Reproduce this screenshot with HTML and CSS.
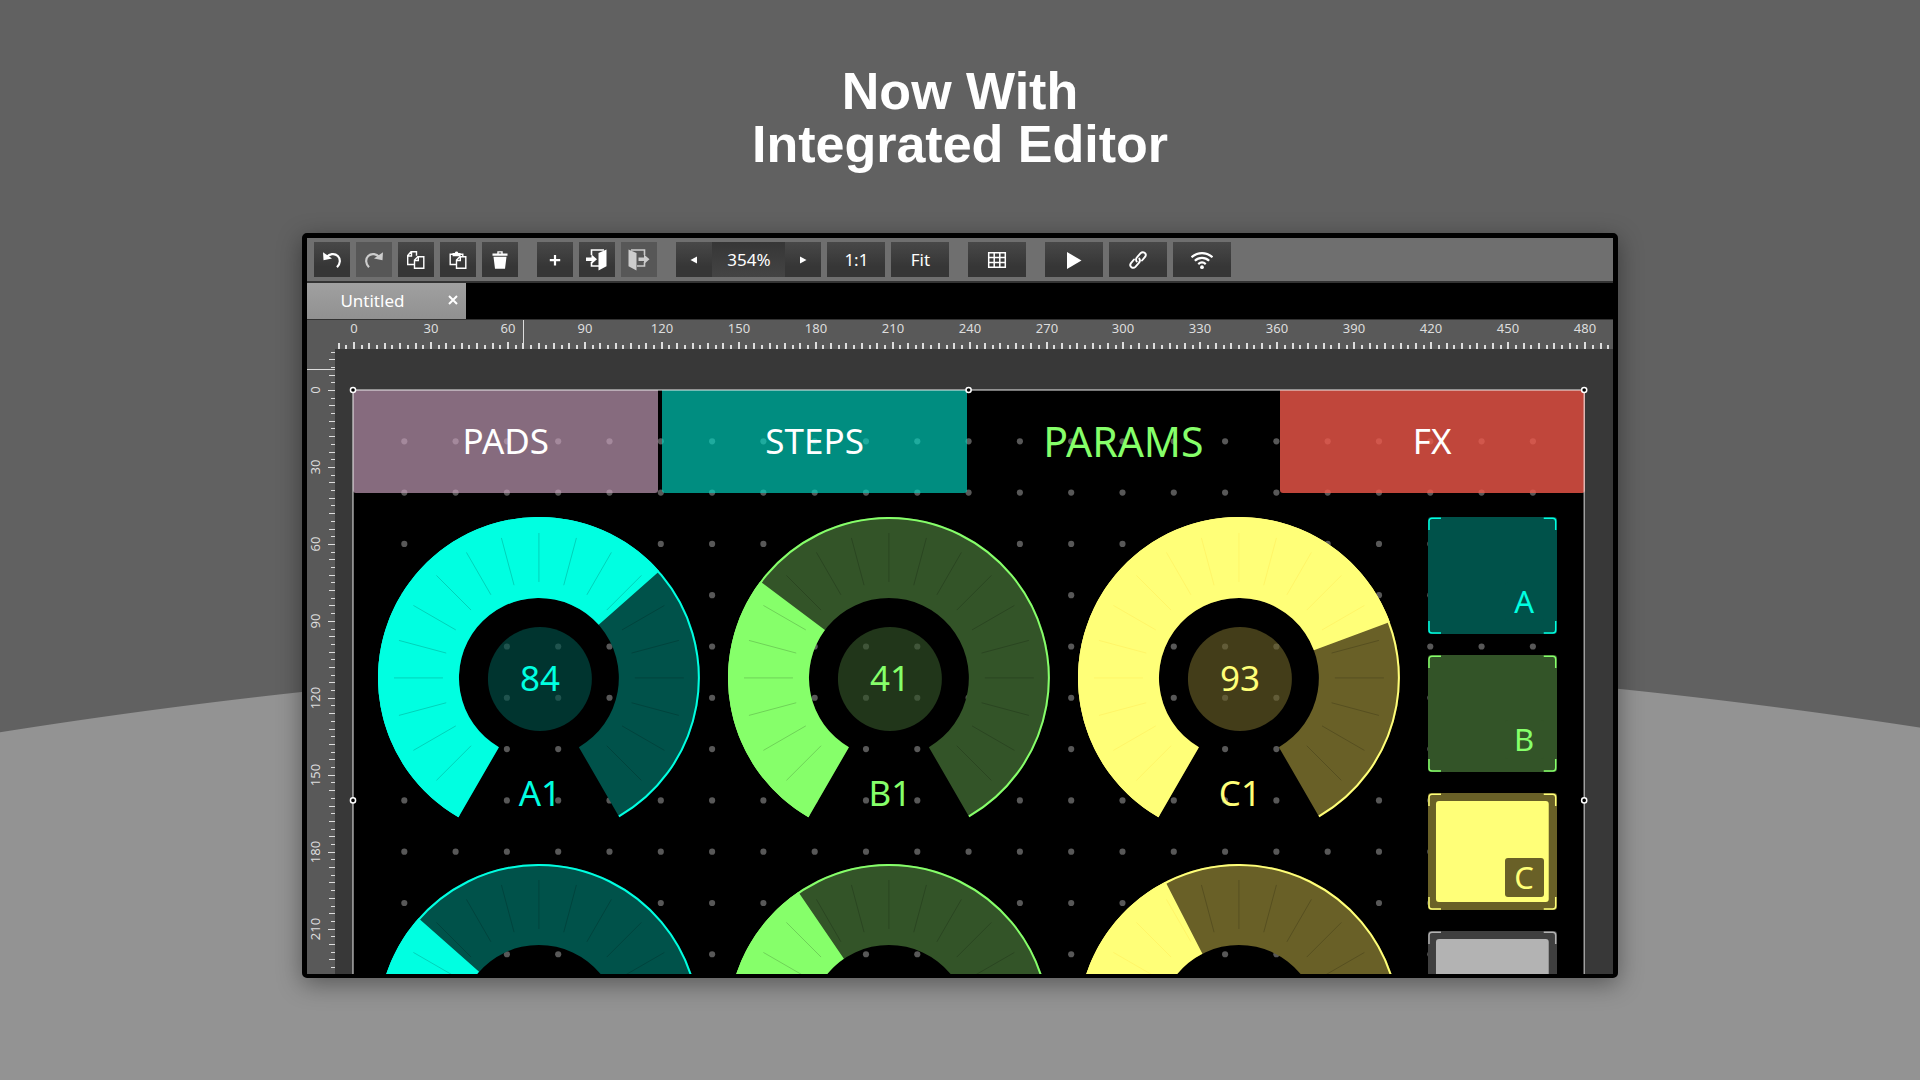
FILE: index.html
```
<!DOCTYPE html>
<html lang="en">
<head>
    <meta charset="UTF-8">
    <meta name="viewport" content="width=device-width, initial-scale=1.0">
    <title>Integrated Editor</title>
    <link rel="stylesheet" href="styles.css">
</head>
<body>
    <h1 class="headline">Now With<br>Integrated Editor</h1>

    <main class="window">
        <div class="toolbar">
            <div class="group">
                <button class="tool" aria-label="Undo"><svg viewBox="0 0 20 20"><path d="M4.5 7.500C7 3.800 12.500 2.800 15.800 6c3 3 2.600 8-.8 11.300" fill="none" stroke="currentColor" stroke-width="2.200"/><path d="M1 2.200l.5 8 8.500-1.700z"/></svg></button>
                <button class="tool" aria-label="Redo" disabled><svg viewBox="0 0 20 20"><path d="M15.500 7.500C13 3.800 7.500 2.800 4.200 6c-3 3-2.600 8 .8 11.300" fill="none" stroke="currentColor" stroke-width="2.200"/><path d="M19 2.200l-.5 8-8.500-1.700z"/></svg></button>
                <button class="tool" aria-label="Copy"><svg viewBox="0 0 20 20"><path d="M8 14.500H1.700V5.500L5 1.700h5.500v4M5.500 2v4H2M8.500 18.300V10l3.300-3.300h6v11.600zM12.300 7v3.500H9" fill="none" stroke="currentColor" stroke-width="1.400"/></svg></button>
                <button class="tool" aria-label="Paste"><svg viewBox="0 0 20 20"><path d="M8 14.500H2.200V4.200h12.600v2M8.500 18.300V10l3.300-3.300h6v11.600zM12.300 7v3.500H9" fill="none" stroke="currentColor" stroke-width="1.400"/><path d="M4.500 3h2.300a1.800 1.800 0 0 1 3.500 0h2.300v3.200h-8z"/></svg></button>
                <button class="tool" aria-label="Delete"><svg viewBox="0 0 20 20"><path d="M2.500 3.500h4.800V1.300h5.400v2.200h4.800v2.300h-15zM8.700 2.500v1h2.600v-1zM3.500 6.800h13L15 18.800H5z" fill-rule="evenodd"/></svg></button>
            </div>
            <div class="group">
                <button class="tool" aria-label="Add"><svg viewBox="0 0 20 20"><path d="M10 5v10.500M4.800 10.200h10.400" fill="none" stroke="currentColor" stroke-width="2.200"/></svg></button>
                <button class="tool" aria-label="Import"><svg class="door" viewBox="0 0 22 22"><path d="M5.500 6V1H18M5.500 13v4H13" fill="none" stroke="currentColor" stroke-width="1.600"/><path d="M12.500 4L20.500.5v16.800l-8 4.200z"/><path d="M0 8.500h5.500V5.500l5.500 4.700-5.500 4.700v-3H0z"/></svg></button>
                <button class="tool" aria-label="Export" disabled><svg class="door" viewBox="0 0 22 22"><path d="M3 1h13.500v5M16.500 13v4H9" fill="none" stroke="currentColor" stroke-width="1.600"/><path d="M.5.500l8 3.500V21.500l-8-4.200z"/><path d="M10.500 8.500h5.500V5.500l5.500 4.700-5.500 4.700v-3h-5.500z"/></svg></button>
            </div>
            <div class="group">
                <div class="zoom">
                    <button class="zoom-step" aria-label="Zoom out"><svg viewBox="0 0 8 8"><path d="M7 .5v7L.5 4z"/></svg></button>
                    <output class="zoom-value">354%</output>
                    <button class="zoom-step" aria-label="Zoom in"><svg viewBox="0 0 8 8"><path d="M1 .5v7L7.500 4z"/></svg></button>
                </div>
                <button class="tool wide">1:1</button>
                <button class="tool wide">Fit</button>
            </div>
            <div class="group">
                <button class="tool wide" aria-label="Grid"><svg viewBox="0 0 20 20"><path d="M1.700 2.700h16.600v14.600H1.700zM1.700 7.500h16.600M1.700 12.500h16.600M7.200 2.700v14.600M12.800 2.700v14.600" fill="none" stroke="currentColor" stroke-width="1.500"/></svg></button>
            </div>
            <div class="group">
                <button class="tool wide" aria-label="Play"><svg viewBox="0 0 20 20"><path d="M3 2v17L17.500 10.500z"/></svg></button>
                <button class="tool wide" aria-label="Link"><svg viewBox="0 0 20 20"><g fill="none" stroke="currentColor" stroke-width="1.900" stroke-linecap="round"><path d="M8.700 11.500c-1-1.500-.8-3 .4-4.300l3.500-4c2.500-2.500 6.600.3 4.600 3.500l-3.200 3.800"/><path d="M11.300 8.500c1 1.500.8 3-.4 4.300l-3.500 4c-2.500 2.500-6.600-.3-4.600-3.500l3.200-3.800"/></g></svg></button>
                <button class="tool wide" aria-label="Network"><svg class="door" viewBox="0 0 20 20"><g fill="none" stroke="currentColor" stroke-width="2"><path d="M.5 7.500c5.500-5 13.500-5 19 0M3.500 10.700c3.700-3.500 9.300-3.500 13 0M6.600 13.700c2-1.800 4.800-1.800 6.800 0"/></g><circle cx="10" cy="16.500" r="1.700"/></svg></button>
            </div>
        </div>

        <div class="tabs">
            <div class="tab">
                <span class="tab-name">Untitled</span>
                <button class="tab-close" aria-label="Close tab"><svg viewBox="0 0 10 10"><path d="M1 1l8 8M9 1L1 9" fill="none" stroke="currentColor" stroke-width="2"/></svg></button>
            </div>
        </div>

        <div class="workspace">
            <div class="corner"></div>
            <svg class="ruler ruler-top" id="rulerTop"></svg>
            <svg class="ruler ruler-left" id="rulerLeft"></svg>
            <div class="canvas">
                <div class="artboard">
                    <svg class="dots" id="dots" viewBox="0 0 480 320"></svg>
                    <nav class="pages">
                        <button class="page pads">PADS</button>
                        <button class="page steps">STEPS</button>
                        <button class="page params">PARAMS</button>
                        <button class="page fx">FX</button>
                    </nav>
                    <div class="controls">
                        <svg class="dial cyan" data-value="84" data-label="A1"></svg>
                        <svg class="dial green" data-value="41" data-label="B1"></svg>
                        <svg class="dial yellow" data-value="93" data-label="C1"></svg>
                        <svg class="dial cyan" data-value="43"></svg>
                        <svg class="dial green" data-value="49"></svg>
                        <svg class="dial yellow" data-value="52"></svg>
                        <div class="side">
                            <button class="pad cyan"><span class="pad-label">A</span></button>
                            <button class="pad green"><span class="pad-label">B</span></button>
                            <button class="pad yellow lit"><span class="pad-label">C</span></button>
                            <button class="pad grey lit" aria-label="D"></button>
                        </div>
                    </div>
                    <svg class="selection" viewBox="0 0 480 320">
                        <rect class="selection-line" width="480" height="320"/>
                        <circle class="handle" cx="0" cy="0" r="1"/>
                        <circle class="handle" cx="240" cy="0" r="1"/>
                        <circle class="handle" cx="480" cy="0" r="1"/>
                        <circle class="handle" cx="0" cy="160" r="1"/>
                        <circle class="handle" cx="480" cy="160" r="1"/>
                    </svg>
                </div>
            </div>
        </div>
    </main>

    <script>
        const artboard = document.querySelector('.artboard');
        const canvas = document.querySelector('.canvas');

        // Rulers: a tick every 3 units, a number every 30
        function drawRulers() {
            const board = artboard.getBoundingClientRect();
            const area = canvas.getBoundingClientRect();
            const unit = board.width / 480;
            const left = board.left - area.left;
            const top = board.top - area.top;

            let h = '';
            for (let u = -6; u <= 489; u += 3) {
                const x = Math.round(left + u * unit);
                const len = u % 30 === 0 ? 7 : u % 6 === 0 ? 6 : 4;
                h += `<path class="tick" d="M${x} ${29 - len}h2v${len}h-2z"/>`;
                if (u % 30 === 0) {
                    h += `<text x="${x + 1}" y="13" text-anchor="middle">${u}</text>`;
                }
            }
            h += `<path class="cursor" d="M188 0h1v29h-1z"/>`;
            document.getElementById('rulerTop').innerHTML = h;

            let v = '';
            for (let u = -15; top + u * unit < area.height; u += 3) {
                const y = Math.round(top + u * unit);
                const len = u % 30 === 0 ? 7 : u % 6 === 0 ? 6 : 4;
                v += `<path class="tick" d="M${28 - len} ${y}h${len}v1h-${len}z"/>`;
                if (u % 30 === 0) {
                    v += `<text transform="translate(13 ${y}) rotate(-90)" text-anchor="middle">${u}</text>`;
                }
            }
            v += `<path class="cursor" d="M0 20h28v1H0z"/>`;
            document.getElementById('rulerLeft').innerHTML = v;
        }

        function drawDots() {
            let dots = '';
            for (let y = 20; y < 320; y += 20) {
                for (let x = 20; x < 480; x += 20) {
                    dots += `<circle cx="${x}" cy="${y}" r="1.2"/>`;
                }
            }
            document.getElementById('dots').innerHTML = dots;
        }

        // Angles are clockwise from the top
        function point(r, deg) {
            const a = deg * Math.PI / 180;
            return `${(161 + r * Math.sin(a)).toFixed(2)} ${(161 - r * Math.cos(a)).toFixed(2)}`;
        }

        function ring(from, to) {
            const large = to - from > 180 ? 1 : 0;
            return `M${point(161, from)}A161 161 0 ${large} 1 ${point(161, to)}` +
                `L${point(80, to)}A80 80 0 ${large} 0 ${point(80, from)}Z`;
        }

        function drawDial(dial) {
            const value = Number(dial.dataset.value);
            const split = -150 + 300 * value / 127;
            let out = `<path class="dial-rest" d="${ring(-150, 150)}"/>` +
                `<path class="dial-edge" d="M${point(160, -150)}A160 160 0 1 1 ${point(160, 150)}"/>` +
                `<path class="dial-fill" d="${ring(-150, split)}"/>`;
            for (let a = -135; a <= 135; a += 15) {
                out += `<path class="dial-tick${a < split ? ' on' : ''}" d="M${point(96, a)}L${point(145, a)}"/>`;
            }
            out += `<circle class="dial-hub" cx="162" cy="162" r="52"/>`;
            if (dial.dataset.label) {
                out += `<text x="162" y="174">${value}</text>`;
                out += `<text x="162" y="289">${dial.dataset.label}</text>`;
            }
            dial.setAttribute('viewBox', '0 0 322 322');
            dial.innerHTML = out;
        }

        function drawPad(pad) {
            const lit = pad.classList.contains('lit')
                ? '<rect class="pad-light" x="8" y="8" width="113" height="101" rx="3"/>' : '';
            pad.insertAdjacentHTML('afterbegin', `<svg class="pad-frame" viewBox="0 0 129 117">${lit}
                <path class="pad-corner" d="M1 13V4a3 3 0 0 1 3-3h9M116 1h9a3 3 0 0 1 3 3v9M128 104v9a3 3 0 0 1-3 3h-9M13 116H4a3 3 0 0 1-3-3v-9"/></svg>`);
        }

        drawDots();
        document.querySelectorAll('.dial').forEach(drawDial);
        document.querySelectorAll('.pad').forEach(drawPad);
        drawRulers();
        window.addEventListener('resize', drawRulers);
    </script>
</body>
</html>
```
FILE: styles.css
```
* {
    box-sizing: border-box;
}
body {
    margin: 0;
    height: 100vh;
    padding: 65px 0 102px;
    display: flex;
    flex-direction: column;
    align-items: center;
    overflow: hidden;
    font-family: "Noto Sans", "Open Sans", sans-serif;
    color: #fff;
    background: radial-gradient(circle 6230px at 975px 6885px, #939393 6229px, #616161 6230px);
}
button {
    font: inherit;
    color: inherit;
    border: none;
    padding: 0;
    cursor: pointer;
}
svg {
    display: block;
    fill: currentColor;
}
.headline {
    margin: 0 0 62px;
    font-family: "Liberation Sans", Arial, sans-serif;
    font-size: 52px;
    line-height: 53px;
    font-weight: bold;
    text-align: center;
}
.window {
    flex: 1;
    min-height: 0;
    width: 68.5%;
    display: flex;
    flex-direction: column;
    overflow: hidden;
    border: 5px solid #000;
    border-bottom-width: 4px;
    border-radius: 5px;
    background: #000;
    box-shadow: 0 6px 24px rgba(0, 0, 0, 0.4);
}

/* Toolbar */
.toolbar {
    display: flex;
    gap: 19px;
    padding: 4px 7px;
    height: 45px;
    background: #6f6f6f;
    border-bottom: 2px solid #333;
}
.group {
    display: flex;
    gap: 6px;
}
.tool {
    width: 36px;
    height: 35px;
    display: flex;
    align-items: center;
    justify-content: center;
    font-size: 17px;
    background: linear-gradient(#484848, #363636 70%);
}
.tool svg {
    width: 20px;
    height: 20px;
}
.tool svg.door {
    width: 22px;
    height: 22px;
}
.tool:disabled {
    color: #ccc;
    background: #575757;
}
.wide {
    width: 58px;
}
.zoom {
    display: flex;
    font-size: 17px;
    background: linear-gradient(#484848, #363636 70%);
}
.zoom-step {
    width: 36px;
    display: flex;
    align-items: center;
    justify-content: center;
    background: none;
}
.zoom-step svg {
    width: 8px;
    height: 8px;
}
.zoom-value {
    width: 73px;
    line-height: 35px;
    text-align: center;
    background: linear-gradient(#363636, #444);
}

/* Document tabs */
.tabs {
    display: flex;
    height: 36px;
}
.tab {
    width: 159px;
    display: flex;
    align-items: center;
    justify-content: space-between;
    padding: 0 8px 2px 33px;
    font-size: 17px;
    background: linear-gradient(#a0a0a0, #919191);
}
.tab-close {
    background: none;
}
.tab-close svg {
    width: 10px;
    height: 10px;
}

/* Rulers and canvas */
.workspace {
    flex: 1;
    min-height: 0;
    display: grid;
    grid-template: 29px minmax(0, 1fr) / 28px minmax(0, 1fr);
    background: #595959;
    border-top: 1px solid #333;
}
.ruler {
    width: 100%;
    height: 100%;
    font-size: 13px;
    color: #ddd;
}
.canvas {
    overflow: hidden;
    padding: 41px 28px 0 18px;
    background: #383838;
}
.artboard {
    position: relative;
    aspect-ratio: 3 / 2;
    background: #000;
}
.dots,
.selection {
    position: absolute;
    inset: 0;
    width: 100%;
    height: 100%;
}
.dots {
    color: #585858;
}
.selection {
    overflow: visible;
    pointer-events: none;
}
.selection-line {
    fill: none;
    stroke: #eee;
    stroke-width: 1px;
    vector-effect: non-scaling-stroke;
}
.handle {
    fill: #000;
    stroke: #fff;
    stroke-width: 1.5px;
    vector-effect: non-scaling-stroke;
}

/* Page buttons */
.pages {
    position: relative;
    display: grid;
    grid-template-columns: repeat(4, 1fr);
    gap: 4px;
}
.page {
    height: 103px;
    padding-bottom: 2px;
    font-size: 35px;
    border-radius: 0 0 3px 3px;
    background: none;
}
.pads {
    background: rgba(203, 162, 192, 0.66);
}
.steps {
    background: rgba(0, 214, 194, 0.66);
}
.params {
    font-size: 41px;
    color: #86ff6a;
}
.fx {
    background: rgba(240, 88, 74, 0.8);
}

/* Dials and pads */
.controls {
    position: relative;
    display: grid;
    grid-template-columns: 5fr 5fr 5fr 2fr;
    gap: 25px 28px;
    align-items: start;
    padding: 24px 28px 0 25px;
}
.cyan {
    --bright: #00ffe1;
    --dark: #00524a;
}
.green {
    --bright: #86ff6a;
    --dark: #335428;
}
.yellow {
    --bright: #ffff78;
    --dark: #696027;
}
.grey {
    --bright: #b3b3b3;
    --dark: #3f3f3f;
}
.dial {
    width: 100%;
    font-size: 35px;
    text-anchor: middle;
    color: var(--bright);
}
.dial-rest {
    fill: var(--dark);
}
.dial-edge {
    fill: none;
    stroke: var(--bright);
    stroke-width: 2px;
}
.dial-tick {
    stroke: #000;
    stroke-opacity: 0.18;
}
.yellow .dial-tick.on {
    stroke: #ffe650;
    stroke-opacity: 0.4;
}
.dial-hub {
    fill: var(--dark);
    fill-opacity: 0.64;
}
.side {
    grid-area: 1 / 4 / span 2;
    display: flex;
    flex-direction: column;
    gap: 21px;
}
.pad {
    position: relative;
    aspect-ratio: 11 / 10;
    display: flex;
    align-items: flex-end;
    justify-content: flex-end;
    padding: 13px;
    font-size: 31px;
    color: var(--bright);
    background: var(--dark);
    border-radius: 3px;
}
.pad-frame {
    position: absolute;
    inset: 0;
    width: 100%;
    height: 100%;
}
.pad-corner {
    fill: none;
    stroke: var(--bright);
    stroke-width: 1.5px;
}
.pad-label {
    position: relative;
    width: 39px;
    line-height: 39px;
    text-align: center;
    border-radius: 3px;
    background: var(--dark);
}
```
